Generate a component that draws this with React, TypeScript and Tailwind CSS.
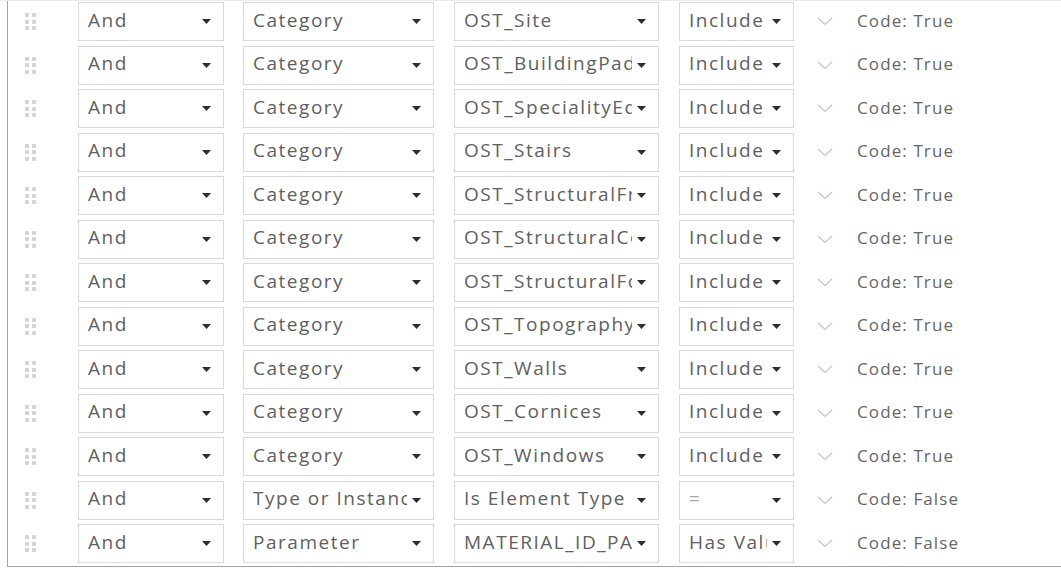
import React from "react"

type Rule = {
  op: string
  kind: string
  target: string
  cond: string
  code: string
}

const rules: Rule[] = [
  { op: "And", kind: "Category", target: "OST_Site", cond: "Include", code: "Code: True" },
  { op: "And", kind: "Category", target: "OST_BuildingPad", cond: "Include", code: "Code: True" },
  { op: "And", kind: "Category", target: "OST_SpecialityEquipment", cond: "Include", code: "Code: True" },
  { op: "And", kind: "Category", target: "OST_Stairs", cond: "Include", code: "Code: True" },
  { op: "And", kind: "Category", target: "OST_StructuralFraming", cond: "Include", code: "Code: True" },
  { op: "And", kind: "Category", target: "OST_StructuralColumns", cond: "Include", code: "Code: True" },
  { op: "And", kind: "Category", target: "OST_StructuralFoundation", cond: "Include", code: "Code: True" },
  { op: "And", kind: "Category", target: "OST_Topography", cond: "Include", code: "Code: True" },
  { op: "And", kind: "Category", target: "OST_Walls", cond: "Include", code: "Code: True" },
  { op: "And", kind: "Category", target: "OST_Cornices", cond: "Include", code: "Code: True" },
  { op: "And", kind: "Category", target: "OST_Windows", cond: "Include", code: "Code: True" },
  { op: "And", kind: "Type or Instance", target: "Is Element Type", cond: "=", code: "Code: False" },
  { op: "And", kind: "Parameter", target: "MATERIAL_ID_PARAM", cond: "Has Value", code: "Code: False" },
]

function Caret() {
  return (
    <svg width="9" height="5" viewBox="0 0 9 5" className="shrink-0 block">
      <path d="M0 0h9L4.5 5z" fill="#2e2e2e" />
    </svg>
  )
}

// drag grip, 2 x 3 dots
function Handle() {
  return (
    <div className="w-fit grid grid-cols-[4px_4px] gap-x-[3px] gap-y-[2.5px]">
      {Array.from({ length: 6 }).map((_, i) => (
        <span key={i} className="block w-[4px] h-[4px] rounded-[1px] bg-[#d4d4d4]" />
      ))}
    </div>
  )
}

function Select({ value, width, muted }: { value: string; width: string; muted?: boolean }) {
  return (
    <div
      className={`${width} h-[39px] shrink-0 flex items-center border border-[#d9d9d9] bg-white pl-[9px] pr-[12px]`}
    >
      <span
        className={`flex-1 min-w-0 overflow-hidden whitespace-nowrap text-[19px] tracking-[0.08em] leading-none pb-[3px] ${
          muted ? "text-[#a8a8a8]" : "text-[#606060]"
        }`}
      >
        {value}
      </span>
      <span className="ml-[5px]">
        <Caret />
      </span>
    </div>
  )
}

export default function App() {
  return (
    <div
      className="w-[1061px] h-[574px] overflow-hidden bg-white border-t border-[#ececec]"
      style={{ fontFamily: '"Open Sans", "Noto Sans", sans-serif' }}
    >
      <div className="ml-[7px] -mt-[1px] border-l border-b border-[#a3a3a3]">
        {rules.map((r, i) => (
          <div key={i} className="h-[43.5px] flex items-center">
            <div className="w-[70px] shrink-0 pl-[17px]">
              <Handle />
            </div>
            <Select value={r.op} width="w-[146px]" />
            <div className="ml-[19px]">
              <Select value={r.kind} width="w-[191px]" />
            </div>
            <div className="ml-[20px]">
              <Select value={r.target} width="w-[205px]" />
            </div>
            <div className="ml-[20px]">
              <Select value={r.cond} width="w-[115px]" muted={r.cond === "="} />
            </div>
            <svg width="16" height="9" viewBox="0 0 16 9" className="ml-[23px] shrink-0">
              <path d="M1 1l7 6.5L15 1" fill="none" stroke="#c4c4c4" strokeWidth="1.2" />
            </svg>
            <span className="ml-[24px] text-[17px] tracking-[0.065em] text-[#666] whitespace-nowrap pb-[3px]">
              {r.code}
            </span>
          </div>
        ))}
      </div>
    </div>
  )
}
